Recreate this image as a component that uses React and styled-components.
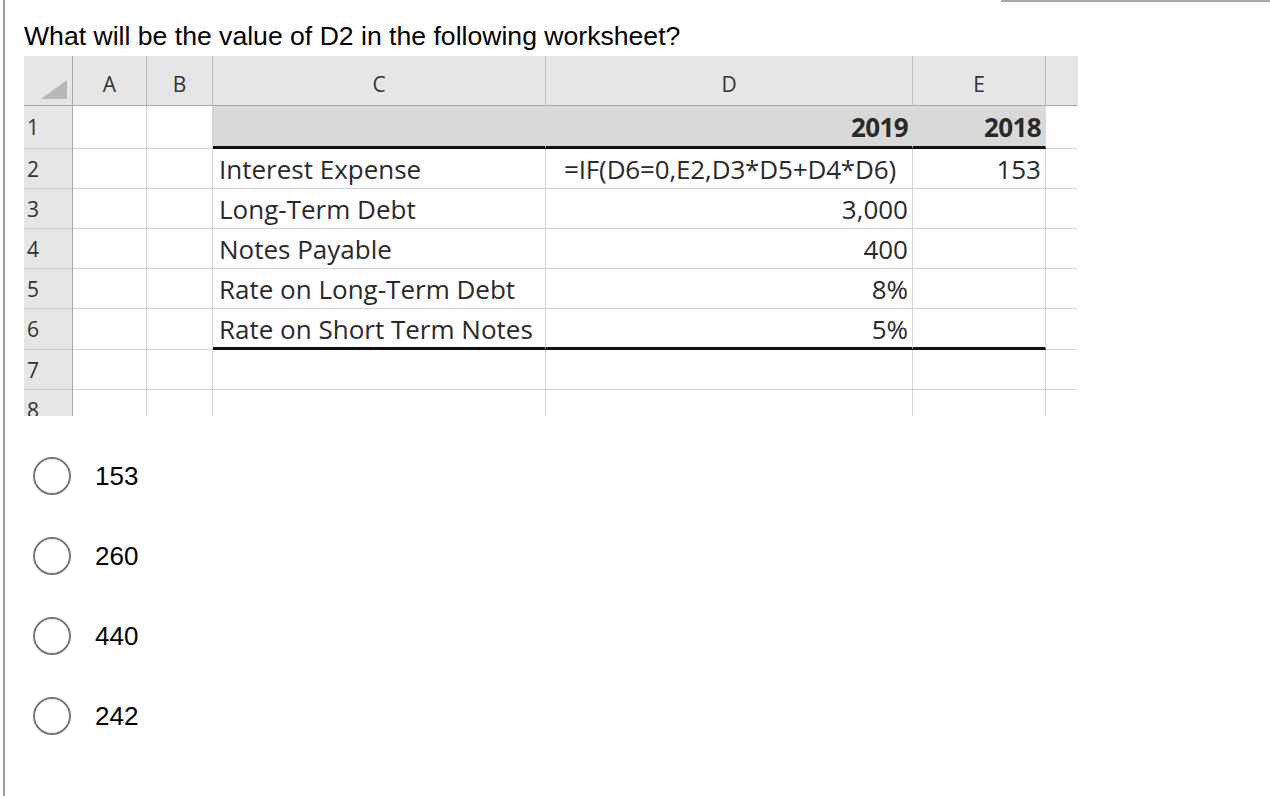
import React from 'react'
import styled, { createGlobalStyle } from 'styled-components'

const GlobalStyle = createGlobalStyle`
  html, body {
    margin: 0;
    padding: 0;
    background: #fff;
  }
  body {
    font-family: "Liberation Sans", Arial, sans-serif;
  }
`

const Page = styled.div`
  box-sizing: border-box;
  margin-left: 3px;
  min-height: 796px;
  border-left: 2px solid #9e9e9e;
  display: flex;
  flex-direction: column;
`

const TopRule = styled.div`
  display: flex;
  justify-content: flex-end;
  div {
    width: 269px;
    height: 2px;
    background: #a8a8a8;
  }
`

const Question = styled.div`
  margin: 19px 0 0 19px;
  font-size: 26.6px;
  line-height: 30px;
  color: #000;
`

const Sheet = styled.div`
  box-sizing: border-box;
  margin: 5px 0 0 19px;
  width: 1054px;
  height: 360px;
  overflow: hidden;
  display: grid;
  grid-template-columns: 49px 74px 66px 333px 367px 133px 32px;
  grid-template-rows: 50px 43px 40px 40px 40px 40px 41px 40px 40px;
  font-family: "Open Sans", "Noto Sans", sans-serif;
  color: #2a2a2a;
`

const Corner = styled.div`
  box-sizing: border-box;
  background: #e6e6e6;
  border-right: 1px solid #a9a9a9;
  border-bottom: 1px solid #a9a9a9;
  display: flex;
  align-items: flex-end;
  justify-content: flex-end;
  padding: 0 5px 6px 0;
`

const ColHead = styled.div`
  box-sizing: border-box;
  background: #e6e6e6;
  border-right: 1px solid ${p => (p.$edge ? '#e6e6e6' : '#bdbdbd')};
  border-bottom: 1px solid #a9a9a9;
  display: flex;
  align-items: center;
  justify-content: center;
  padding-top: 7px;
  font-size: 21px;
  color: #333;
`

const RowHead = styled.div`
  box-sizing: border-box;
  background: #e6e6e6;
  border-right: 1px solid #a9a9a9;
  border-bottom: 1px solid #cbcbcb;
  display: flex;
  align-items: center;
  padding-left: 3px;
  font-size: 21px;
  color: #333;
`

const Cell = styled.div`
  box-sizing: border-box;
  background: ${p => (p.$shade ? '#d9d9d9' : '#fff')};
  border-right: 1px solid ${p => (p.$edge ? '#fff' : p.$shade ? '#d9d9d9' : '#d4d4d4')};
  border-bottom: ${p => (p.$thick ? '3px solid #111' : '1px solid #d4d4d4')};
  display: flex;
  align-items: center;
  justify-content: ${p =>
    p.$align === 'right' ? 'flex-end' : p.$align === 'center' ? 'center' : 'flex-start'};
  padding: ${p => (p.$thick ? '2px 4px 0 6px' : '0 4px 0 6px')};
  font-size: 26px;
  font-weight: ${p => (p.$bold ? 700 : 400)};
  letter-spacing: ${p => (p.$bold ? '-0.6px' : p.$align === 'center' ? '-0.15px' : '0')};
  white-space: nowrap;
`

const Options = styled.div`
  margin: 20px 0 0 28px;
  display: flex;
  flex-direction: column;
`

const Option = styled.label`
  height: 80px;
  display: flex;
  align-items: center;
  gap: 24px;
  font-size: 26px;
  color: #000;
  cursor: pointer;
`

const Radio = styled.span`
  box-sizing: border-box;
  width: 38px;
  height: 38px;
  border-radius: 50%;
  border: 2px solid #7a7a7a;
  background: #fff;
`

const rows = [
  { n: 1, c: '', d: '2019', e: '2018', shade: true, thick: true },
  { n: 2, c: 'Interest Expense', d: '=IF(D6=0,E2,D3*D5+D4*D6)', e: '153', formula: true },
  { n: 3, c: 'Long-Term Debt', d: '3,000' },
  { n: 4, c: 'Notes Payable', d: '400' },
  { n: 5, c: 'Rate on Long-Term Debt', d: '8%' },
  { n: 6, c: 'Rate on Short Term Notes', d: '5%', thick: true },
  { n: 7 },
  { n: 8 },
]

const answers = ['153', '260', '440', '242']

const CornerMark = () => (
  <svg width="26" height="19" viewBox="0 0 26 19">
    <polygon points="26,0 26,19 0,19" fill="#b7b7b7" />
  </svg>
)

export default function App() {
  return (
    <>
      <GlobalStyle />
      <Page>
        <TopRule><div /></TopRule>
        <Question>What will be the value of D2 in the following worksheet?</Question>
        <Sheet>
          <Corner><CornerMark /></Corner>
          {['A', 'B', 'C', 'D', 'E', ''].map((h, i) => (
            <ColHead key={i} $edge={i === 5}>{h}</ColHead>
          ))}
          {rows.map(r => (
            <React.Fragment key={r.n}>
              <RowHead>{r.n}</RowHead>
              <Cell />
              <Cell />
              <Cell $shade={r.shade} $thick={r.thick}>{r.c}</Cell>
              <Cell $shade={r.shade} $thick={r.thick} $bold={r.shade} $align={r.formula ? 'center' : 'right'}>
                {r.d}
              </Cell>
              <Cell $shade={r.shade} $thick={r.thick} $bold={r.shade} $align="right">{r.e}</Cell>
              <Cell $edge />
            </React.Fragment>
          ))}
        </Sheet>
        <Options>
          {answers.map(a => (
            <Option key={a}>
              <Radio />
              <span>{a}</span>
            </Option>
          ))}
        </Options>
      </Page>
    </>
  )
}
